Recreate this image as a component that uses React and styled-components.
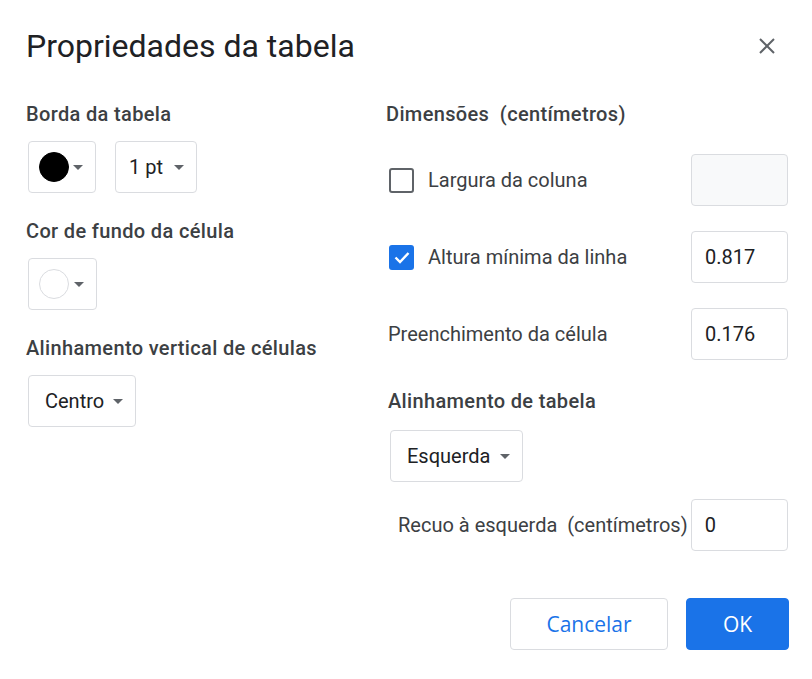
import React from 'react';
import styled, { createGlobalStyle } from 'styled-components';

const Global = createGlobalStyle`
  body {
    margin: 0;
    background: #fff;
    font-family: Roboto, "Liberation Sans", sans-serif;
  }
`;

function Caret() {
  return (
    <svg width="10" height="5" viewBox="0 0 10 5">
      <path d="M0 0 L10 0 L5 5 Z" fill="#5f6368" />
    </svg>
  );
}

function App() {
  return (
    <>
      <Global />
      <Dialog>
        <Header>
          <Title>Propriedades da tabela</Title>
          <Close aria-label="Fechar">
            <svg width="16" height="16" viewBox="0 0 16 16">
              <path d="M1 1 L15 15 M15 1 L1 15" stroke="#5f6368" strokeWidth="2" />
            </svg>
          </Close>
        </Header>
        <Body>
          <Column>
            <Label>Borda da tabela</Label>
            <Controls>
              <Select $w={68}>
                <Swatch $fill="#000" />
                <Caret />
              </Select>
              <Select $w={82} $pl={13}>
                1 pt
                <Caret />
              </Select>
            </Controls>
            <Label>Cor de fundo da célula</Label>
            <Controls>
              <Select $w={69}>
                <Swatch $fill="#fff" />
                <Caret />
              </Select>
            </Controls>
            <Label>Alinhamento vertical de células</Label>
            <Controls>
              <Select $w={108} $pl={16}>
                Centro
                <Caret />
              </Select>
            </Controls>
          </Column>
          <Column>
            <DimsLabel>Dimensões&nbsp; (centímetros)</DimsLabel>
            <FieldRow>
              <CheckLabel>
                <Check />
                Largura da coluna
              </CheckLabel>
              <Input disabled />
            </FieldRow>
            <FieldRow>
              <CheckLabel>
                <Check $on>
                  <svg width="16" height="13" viewBox="0 0 16 13">
                    <path d="M1.5 6.5 L6 11 L14.5 2" stroke="#fff" strokeWidth="2.4" fill="none" />
                  </svg>
                </Check>
                Altura mínima da linha
              </CheckLabel>
              <Input defaultValue="0.817" />
            </FieldRow>
            <FieldRow>
              <FieldText>Preenchimento da célula</FieldText>
              <Input defaultValue="0.176" />
            </FieldRow>
            <SubLabel>Alinhamento de tabela</SubLabel>
            <AlignBox>
              <Select $w={133} $pl={16}>
                Esquerda
                <Caret />
              </Select>
            </AlignBox>
            <IndentRow>
              <FieldText>Recuo à esquerda&nbsp; (centímetros)</FieldText>
              <Input defaultValue="0" />
            </IndentRow>
          </Column>
        </Body>
        <Footer>
          <Button>Cancelar</Button>
          <Button $primary>OK</Button>
        </Footer>
      </Dialog>
    </>
  );
}

export default App;

const Dialog = styled.div`
  width: 812px;
  height: 679px;
  box-sizing: border-box;
  padding: 24px 23px 0 26px;
  color: #3c4043;
`;

const Header = styled.div`
  display: flex;
  justify-content: space-between;
  align-items: center;
`;

const Title = styled.h1`
  margin: 0;
  font-family: Roboto, sans-serif;
  font-size: 32px;
  font-weight: 400;
  line-height: 44px;
  color: #202124;
`;

const Close = styled.button`
  display: flex;
  border: 0;
  padding: 0;
  margin-right: 14px;
  background: none;
`;

const Body = styled.div`
  display: grid;
  grid-template-columns: 360px 1fr;
  margin-top: 34px;
`;

const Column = styled.div`
  display: flex;
  flex-direction: column;
  align-items: flex-start;
`;

const Label = styled.div`
  font-family: Roboto, sans-serif;
  font-size: 20px;
  font-weight: 500;
  letter-spacing: 0.35px;
  line-height: 24px;
  color: #3c4043;
`;

const DimsLabel = styled(Label)`
  margin-bottom: 28px;
`;

const SubLabel = styled(Label)`
  margin: 29px 0 0 2px;
`;

const Controls = styled.div`
  display: flex;
  gap: 19px;
  margin: 15px 0 26px 2px;
`;

const Select = styled.div`
  display: flex;
  align-items: center;
  justify-content: space-between;
  width: ${p => p.$w}px;
  height: 52px;
  box-sizing: border-box;
  padding: 0 12px 0 ${p => p.$pl || 10}px;
  border: 1px solid #dadce0;
  border-radius: 4px;
  font-size: 20px;
  color: #202124;
`;

const Swatch = styled.span`
  width: 30px;
  height: 30px;
  border-radius: 50%;
  box-sizing: border-box;
  background: ${p => p.$fill};
  border: 1px solid ${p => (p.$fill === '#fff' ? '#dadce0' : p.$fill)};
`;

const FieldRow = styled.div`
  display: flex;
  align-items: center;
  justify-content: space-between;
  align-self: stretch;
  margin-right: 1px;
  & + & {
    margin-top: 25px;
  }
`;

const CheckLabel = styled.label`
  display: flex;
  align-items: center;
  gap: 14px;
  margin-left: 3px;
  font-size: 20px;
  line-height: 24px;
  color: #3c4043;
`;

const Check = styled.span`
  display: flex;
  align-items: center;
  justify-content: center;
  width: 25px;
  height: 25px;
  box-sizing: border-box;
  border-radius: 3px;
  border: ${p => (p.$on ? '0' : '2px solid #5f6368')};
  background: ${p => (p.$on ? '#1a73e8' : 'transparent')};
`;

const FieldText = styled.span`
  margin-left: 2px;
  font-size: 20px;
  line-height: 24px;
  color: #3c4043;
`;

const Input = styled.input`
  width: 97px;
  height: 52px;
  box-sizing: border-box;
  padding: 0 13px;
  border: 1px solid #dadce0;
  border-radius: 4px;
  font-family: Roboto, sans-serif;
  font-size: 20px;
  color: #202124;
  background: #fff;
  &:disabled {
    background: #f8f9fa;
  }
`;

const AlignBox = styled.div`
  margin: 17px 0 17px 4px;
`;

const IndentRow = styled.div`
  display: flex;
  align-items: center;
  gap: 3px;
  margin-left: 10px;
`;

const Footer = styled.div`
  display: flex;
  justify-content: flex-end;
  gap: 18px;
  margin-top: 47px;
`;

const Button = styled.button`
  width: ${p => (p.$primary ? 103 : 158)}px;
  height: 52px;
  border-radius: 4px;
  border: 1px solid ${p => (p.$primary ? '#1a73e8' : '#dadce0')};
  background: ${p => (p.$primary ? '#1a73e8' : '#fff')};
  color: ${p => (p.$primary ? '#fff' : '#1a73e8')};
  font-family: "Open Sans", Roboto, sans-serif;
  font-size: 21px;
  font-weight: 500;
`;
